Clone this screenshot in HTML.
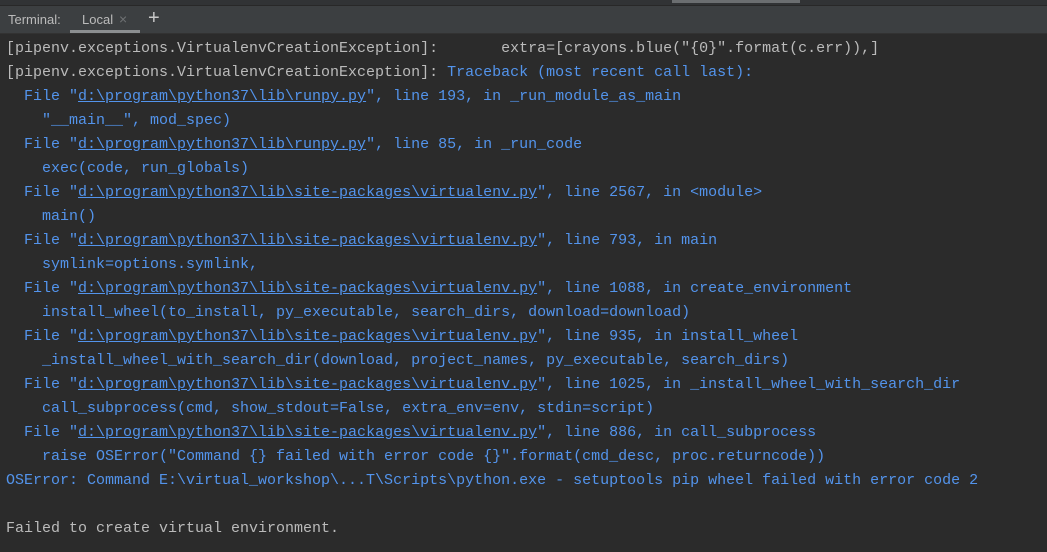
<!DOCTYPE html>
<html><head><meta charset="utf-8"><style>
html,body{margin:0;padding:0;width:1047px;height:552px;overflow:hidden;background:#2b2b2b;}
.top{position:absolute;left:0;top:0;width:1047px;height:5px;background:#313335;border-bottom:1px solid #282828;}
.thumb{position:absolute;left:672px;top:0;width:128px;height:3px;background:#6b6e70;}
.bar{position:absolute;left:0;top:6px;width:1047px;height:27px;background:#3c3f41;border-bottom:1px solid #323232;font-family:"Liberation Sans",sans-serif;font-size:13px;color:#bbbbbb;}
.bar .t{position:absolute;left:8px;top:6px;}
.bar .l{position:absolute;left:82px;top:6px;}
.bar .x{position:absolute;left:119px;top:5px;color:#6f7274;font-size:14px;}
.bar .p{position:absolute;left:148px;top:1px;font-size:20px;color:#c8c8c8;}
.bar .u{position:absolute;left:70px;top:24px;width:70px;height:3px;background:#8c8f91;}
pre{position:absolute;left:6px;top:37px;margin:0;font-family:"Liberation Mono",monospace;font-size:15px;line-height:24px;color:#bbbbbb;}
.b{color:#5394ec;}
.a{color:#5394ec;text-decoration:underline;}
</style></head><body>
<div class="top"><div class="thumb"></div></div>
<div class="bar"><span class="t">Terminal:</span><span class="l">Local</span><span class="x">×</span><span class="p">+</span><div class="u"></div></div>
<pre>[pipenv.exceptions.VirtualenvCreationException]:       extra=[crayons.blue("{0}".format(c.err)),]
[pipenv.exceptions.VirtualenvCreationException]: <span class="b">Traceback (most recent call last):</span>
<span class="b">  File "<span class="a">d:\program\python37\lib\runpy.py</span>", line 193, in _run_module_as_main</span>
<span class="b">    "__main__", mod_spec)</span>
<span class="b">  File "<span class="a">d:\program\python37\lib\runpy.py</span>", line 85, in _run_code</span>
<span class="b">    exec(code, run_globals)</span>
<span class="b">  File "<span class="a">d:\program\python37\lib\site-packages\virtualenv.py</span>", line 2567, in &lt;module&gt;</span>
<span class="b">    main()</span>
<span class="b">  File "<span class="a">d:\program\python37\lib\site-packages\virtualenv.py</span>", line 793, in main</span>
<span class="b">    symlink=options.symlink,</span>
<span class="b">  File "<span class="a">d:\program\python37\lib\site-packages\virtualenv.py</span>", line 1088, in create_environment</span>
<span class="b">    install_wheel(to_install, py_executable, search_dirs, download=download)</span>
<span class="b">  File "<span class="a">d:\program\python37\lib\site-packages\virtualenv.py</span>", line 935, in install_wheel</span>
<span class="b">    _install_wheel_with_search_dir(download, project_names, py_executable, search_dirs)</span>
<span class="b">  File "<span class="a">d:\program\python37\lib\site-packages\virtualenv.py</span>", line 1025, in _install_wheel_with_search_dir</span>
<span class="b">    call_subprocess(cmd, show_stdout=False, extra_env=env, stdin=script)</span>
<span class="b">  File "<span class="a">d:\program\python37\lib\site-packages\virtualenv.py</span>", line 886, in call_subprocess</span>
<span class="b">    raise OSError("Command {} failed with error code {}".format(cmd_desc, proc.returncode))</span>
<span class="b">OSError: Command E:\virtual_workshop\...T\Scripts\python.exe - setuptools pip wheel failed with error code 2</span>

Failed to create virtual environment.</pre>
</body></html>
